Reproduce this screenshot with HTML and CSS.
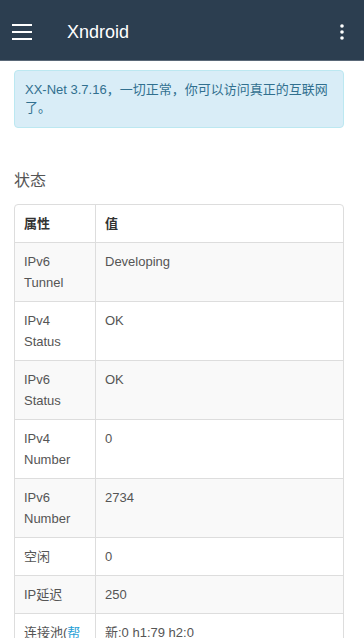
FILE: index.html
```html
<!DOCTYPE html>
<html lang="zh">
<head>
<meta charset="utf-8">
<title>Xndroid</title>
<link rel="stylesheet" href="styles.css">
</head>
<body>
<header class="topbar">
  <button class="icon-btn menu" aria-label="menu">
    <svg width="20" height="16" viewBox="0 0 20 16"><rect x="0" y="0" width="20" height="2" fill="#fff"/><rect x="0" y="7" width="20" height="2" fill="#fff"/><rect x="0" y="14" width="20" height="2" fill="#fff"/></svg>
  </button>
  <h1 class="title">Xndroid</h1>
  <button class="icon-btn more" aria-label="more">
    <svg width="4" height="16" viewBox="0 0 4 16"><circle cx="2" cy="2" r="1.8" fill="#fff"/><circle cx="2" cy="8" r="1.8" fill="#fff"/><circle cx="2" cy="14" r="1.8" fill="#fff"/></svg>
  </button>
</header>
<main class="content">
  <div class="alert">XX-Net 3.7.16，一切正常，你可以访问真正的互联网了。</div>
  <h2 class="section-title">状态</h2>
  <div class="table-wrap">
    <table class="status">
      <colgroup><col class="c-key"><col></colgroup>
      <thead>
        <tr><th>属性</th><th>值</th></tr>
      </thead>
      <tbody>
        <tr><td>IPv6 Tunnel</td><td>Developing</td></tr>
        <tr><td>IPv4 Status</td><td>OK</td></tr>
        <tr><td>IPv6 Status</td><td>OK</td></tr>
        <tr><td>IPv4 Number</td><td>0</td></tr>
        <tr><td>IPv6 Number</td><td>2734</td></tr>
        <tr><td>空闲</td><td>0</td></tr>
        <tr><td>IP延迟</td><td>250</td></tr>
        <tr><td>连接池(<a href="#">帮助</a>)</td><td>新:0 h1:79 h2:0</td></tr>
      </tbody>
    </table>
  </div>
</main>
</body>
</html>
```
FILE: styles.css
```css
html, body {
  margin: 0;
  padding: 0;
  background: #fff;
}
body {
  font-family: "Liberation Sans", "Noto Sans CJK SC", sans-serif;
  font-size: 13px;
  color: #555;
}
.topbar {
  height: 61px;
  box-sizing: border-box;
  padding-top: 4px;
  background: #2c3e50;
  border-bottom: 1px solid #5a6878;
  display: flex;
  align-items: center;
}
.icon-btn {
  background: none;
  border: 0;
  padding: 0;
  display: flex;
  align-items: center;
  justify-content: center;
}
.menu {
  margin-left: 12px;
  width: 20px;
  height: 20px;
}
.title {
  margin: 0 0 0 35px;
  font-size: 18px;
  font-weight: normal;
  color: #fff;
  flex: 1;
  line-height: 22px;
}
.more {
  width: 4px;
  height: 20px;
  margin-right: 20px;
}
.content {
  padding: 9px 20px 0 14px;
}
.alert {
  background: #d9edf7;
  border: 1px solid #bce8f1;
  border-radius: 4px;
  color: #31708f;
  padding: 10px 10px;
  line-height: 18px;
  font-size: 13px;
}
.section-title {
  margin: 42px 0 12px;
  font-size: 16px;
  font-weight: normal;
  line-height: 22px;
  color: #555;
}
.table-wrap {
  border: 1px solid #ddd;
  border-radius: 4px;
  overflow: hidden;
}
.status {
  width: 100%;
  border-collapse: separate;
  border-spacing: 0;
  table-layout: fixed;
}
.c-key {
  width: 81px;
}
.status th,
.status td {
  text-align: left;
  vertical-align: top;
  padding: 8px 9px;
  line-height: 21px;
  font-size: 13px;
}
.status th {
  color: #333;
  font-weight: bold;
}
.status th:first-child,
.status td:first-child {
  border-right: 1px solid #ddd;
}
.status td {
  border-top: 1px solid #ddd;
}
.status tbody tr:nth-child(odd) td {
  background: #f9f9f9;
}
.status a {
  color: #2a9fd6;
  text-decoration: none;
}
```
